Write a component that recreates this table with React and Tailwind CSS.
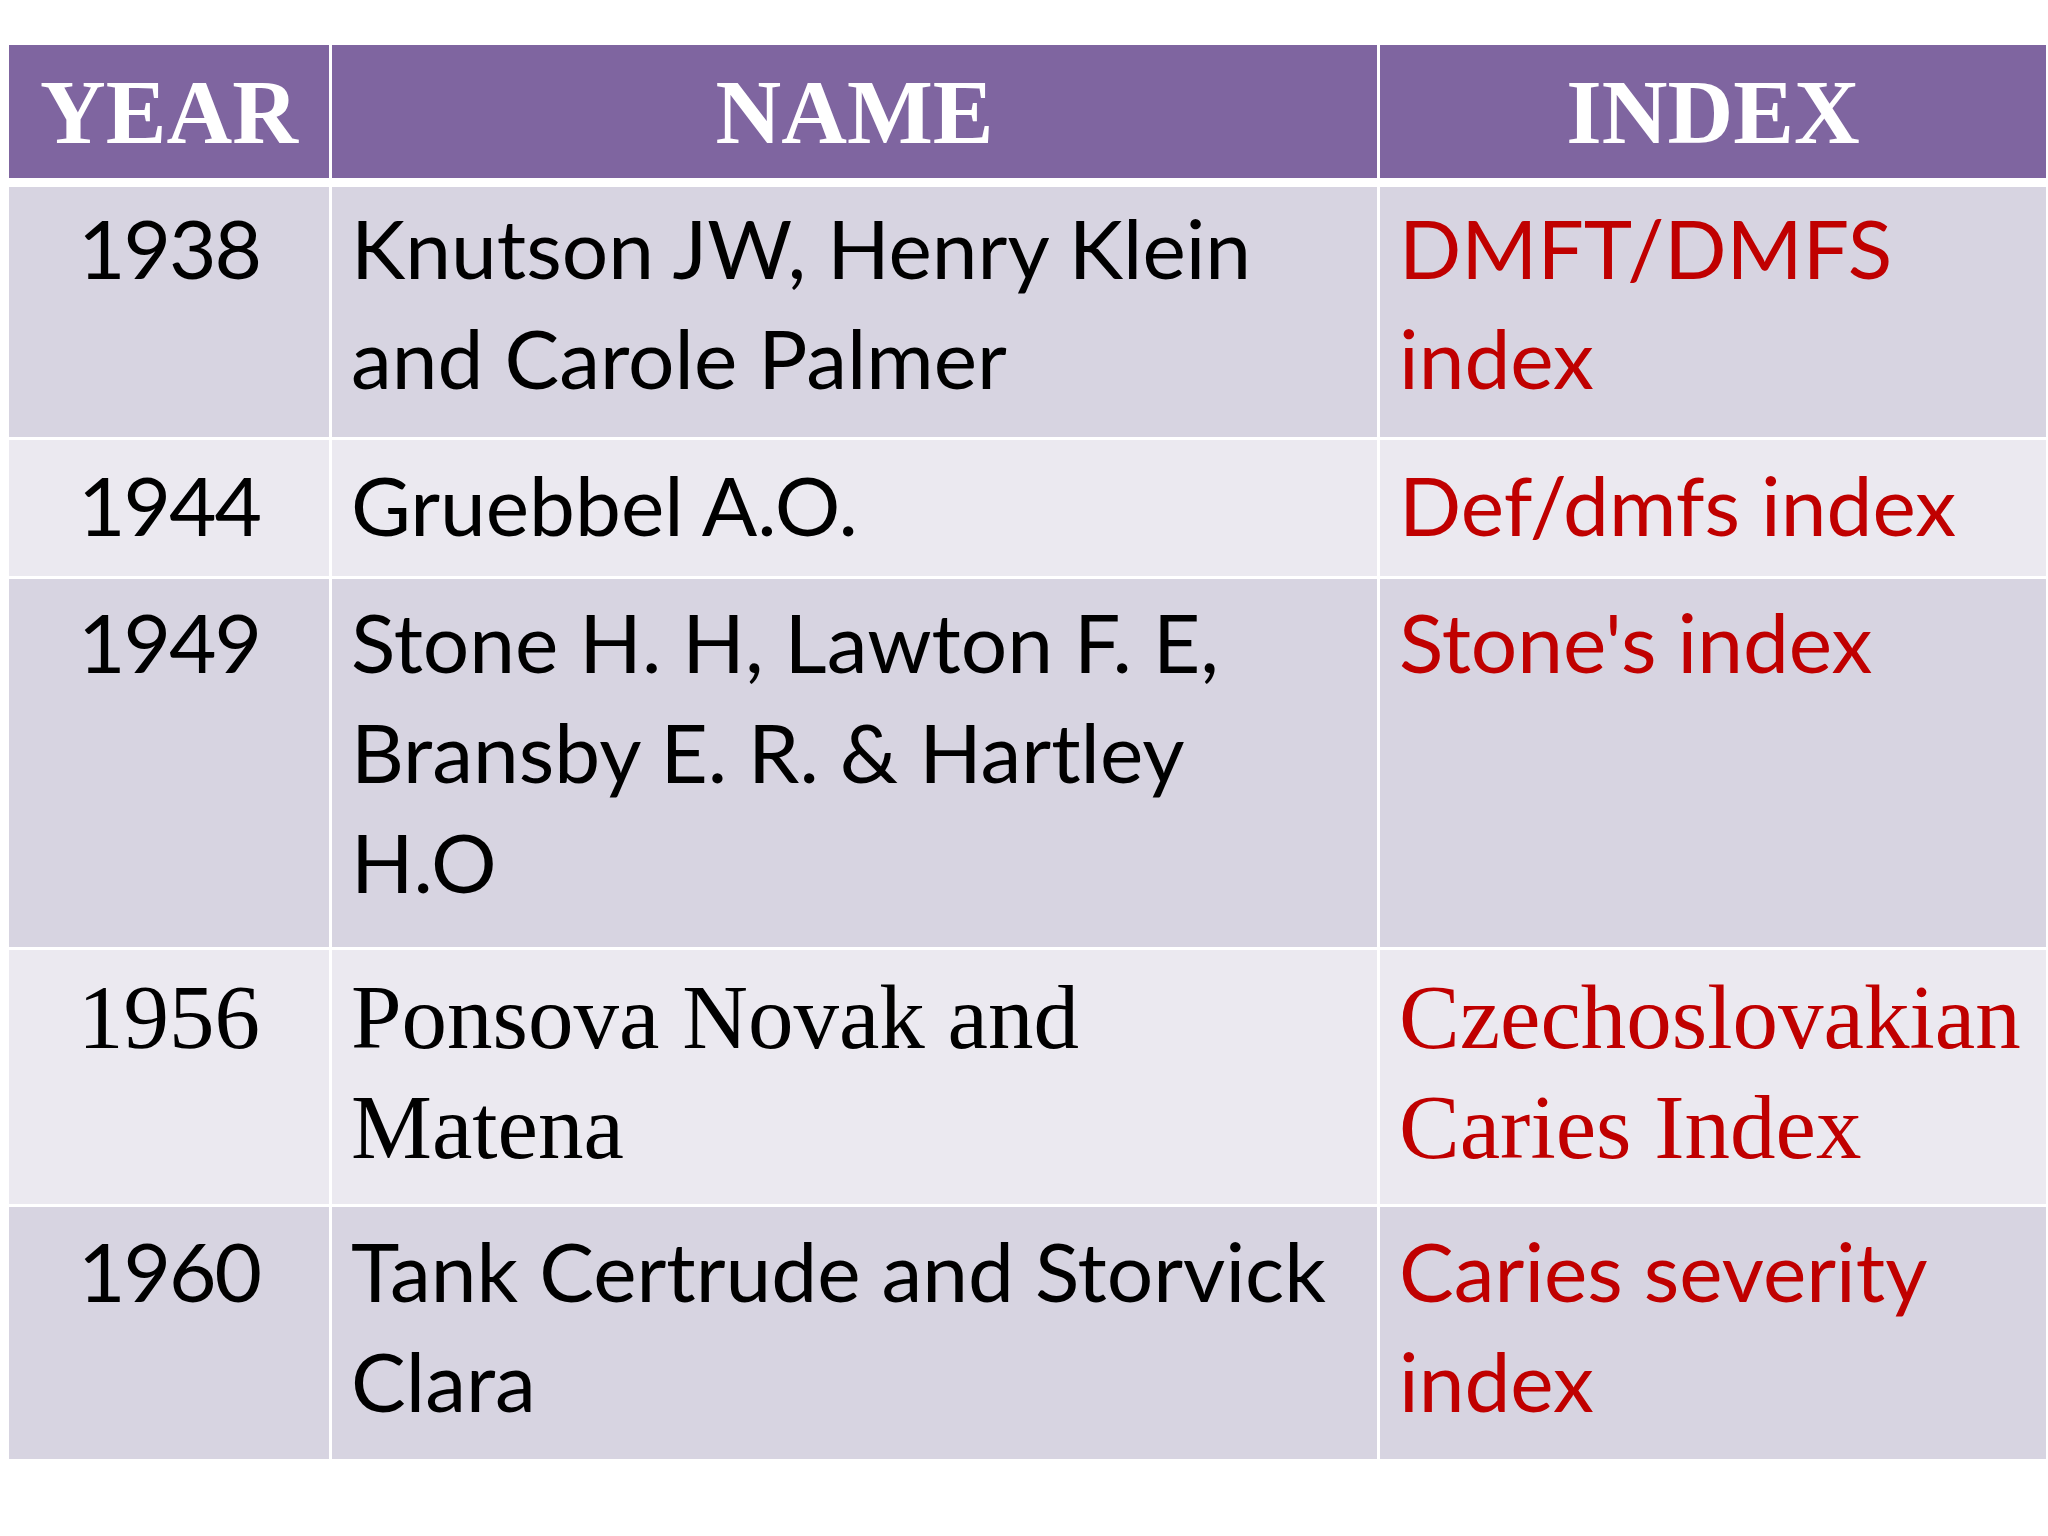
import React from 'react';

const sans = "font-['Lato',sans-serif] text-[82px] leading-[110px]";
const serif = "font-['Liberation_Serif','Times_New_Roman',serif] text-[91px] leading-[110px]";

const rows = [
    { year: '1938', name: ['Knutson JW, Henry Klein', 'and Carole Palmer'], index: ['DMFT/DMFS', 'index'], font: sans, yt: 'tracking-[-2px]', bg: 'bg-[#d7d4e1]', h: 'h-[250px]', pt: 'pt-[5px]' },
    { year: '1944', name: ['Gruebbel A.O.'], index: ['Def/dmfs index'], font: sans, yt: 'tracking-[-2px]', bg: 'bg-[#ebe9f0]', h: 'h-[136px]', pt: 'pt-[9px]' },
    { year: '1949', name: ['Stone H. H, Lawton F. E,', 'Bransby E. R. & Hartley', 'H.O'], index: ["Stone's index"], font: sans, yt: 'tracking-[-2px]', bg: 'bg-[#d7d4e1]', h: 'h-[368px]', pt: 'pt-[7px]' },
    { year: '1956', name: ['Ponsova Novak and', 'Matena'], index: ['Czechoslovakian', 'Caries Index'], font: serif, yt: '', bg: 'bg-[#ebe9f0]', h: 'h-[254px]', pt: 'pt-[13px]' },
    { year: '1960', name: ['Tank Certrude and Storvick', 'Clara'], index: ['Caries severity', 'index'], font: sans, yt: 'tracking-[-2px]', bg: 'bg-[#d7d4e1]', h: 'h-[252px]', pt: 'pt-[8px]' },
];

const Lines = ({ lines }) => lines.map((l, i) => <div key={i} className="whitespace-nowrap">{l}</div>);

const App = () => {
    return (
        <div className="w-[2048px] h-[1536px] bg-white pt-[45px] pl-[9px] pr-[2px]">
            <div className="flex flex-col gap-y-[3px]">
                {/* header */}
                <div className="grid grid-cols-[320px_1045px_666px] gap-x-[3px] h-[133px] mb-[6px] font-['Liberation_Serif','Times_New_Roman',serif] font-bold text-[91px] leading-[110px] text-white">
                    <div className="bg-[#7f65a0] pt-[13px] text-center">YEAR</div>
                    <div className="bg-[#7f65a0] pt-[13px] text-center">NAME</div>
                    <div className="bg-[#7f65a0] pt-[13px] text-center">INDEX</div>
                </div>

                {rows.map((r) => (
                    <div key={r.year} className={`grid grid-cols-[320px_1045px_666px] gap-x-[3px] ${r.h} ${r.font}`}>
                        <div className={`${r.bg} ${r.pt} ${r.yt} text-center text-black`}>{r.year}</div>
                        <div className={`${r.bg} ${r.pt} pl-[19px] text-black`}>
                            <Lines lines={r.name} />
                        </div>
                        <div className={`${r.bg} ${r.pt} pl-[19px] text-[#c00000]`}>
                            <Lines lines={r.index} />
                        </div>
                    </div>
                ))}
            </div>
        </div>
    );
};

export default App;
